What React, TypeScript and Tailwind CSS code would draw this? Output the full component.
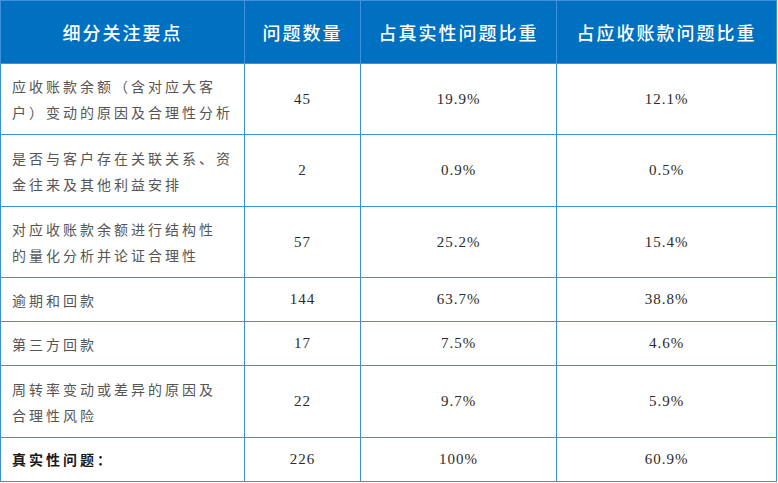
const rows: { label: string[]; count: string; real: string; ar: string; h: string }[] = [
  { label: ['应收账款余额（含对应大客', '户）变动的原因及合理性分析'], count: '45', real: '19.9%', ar: '12.1%', h: 'h-[70px]' },
  { label: ['是否与客户存在关联关系、资', '金往来及其他利益安排'], count: '2', real: '0.9%', ar: '0.5%', h: 'h-[71px]' },
  { label: ['对应收账款余额进行结构性', '的量化分析并论证合理性'], count: '57', real: '25.2%', ar: '15.4%', h: 'h-[70px]' },
  { label: ['逾期和回款'], count: '144', real: '63.7%', ar: '38.8%', h: 'h-[43px]' },
  { label: ['第三方回款'], count: '17', real: '7.5%', ar: '4.6%', h: 'h-[43px]' },
  { label: ['周转率变动或差异的原因及', '合理性风险'], count: '22', real: '9.7%', ar: '5.9%', h: 'h-[71px]' },
];

const serif = "font-['Liberation_Serif','Noto_Sans_CJK_SC',serif]";
const sans = "font-['Noto_Sans_CJK_SC','Noto_Sans',sans-serif]";

function NumCell({ value, h }: { value: string; h: string }) {
  return (
    <div className={`${h} flex items-center justify-center bg-white text-[15px] tracking-[1px] text-[#2b2b2b] ${serif}`}>
      {value}
    </div>
  );
}

export default function App() {
  const headers = ['细分关注要点', '问题数量', '占真实性问题比重', '占应收账款问题比重'];
  return (
    <div className="w-[778px] h-[483px] bg-white">
      <div className="grid w-[777px] grid-cols-[243px_115px_195px_219px] gap-px bg-[#3f90dc] p-px">
        {headers.map((t) => (
          <div
            key={t}
            className={`h-[62px] flex items-center justify-center bg-[#0070c0] text-[18px] font-medium tracking-[2px] text-white ${sans}`}
          >
            {t}
          </div>
        ))}
        {rows.map((r) => (
          <div key={r.count} className="contents">
            <div className={`${r.h} flex flex-col justify-center bg-white pl-[11px] text-[14px] leading-[26px] tracking-[3px] text-[#555555] ${sans}`}>
              {r.label.map((l) => (
                <span key={l} className="whitespace-nowrap">{l}</span>
              ))}
            </div>
            <NumCell value={r.count} h={r.h} />
            <NumCell value={r.real} h={r.h} />
            <NumCell value={r.ar} h={r.h} />
          </div>
        ))}
        <div className={`h-[43px] flex items-center bg-white pl-[11px] text-[14px] font-bold tracking-[3px] text-[#1a1a1a] ${sans}`}>
          真实性问题：
        </div>
        <NumCell value="226" h="h-[43px]" />
        <NumCell value="100%" h="h-[43px]" />
        <NumCell value="60.9%" h="h-[43px]" />
      </div>
    </div>
  );
}
